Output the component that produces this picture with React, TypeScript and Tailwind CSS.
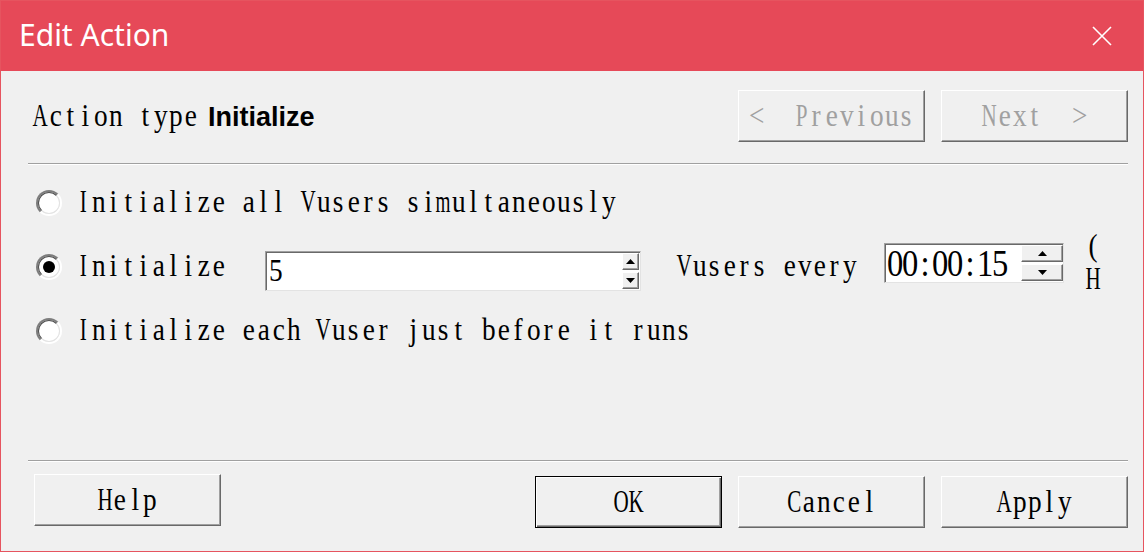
import React from "react";

const serif = "font-['Liberation_Serif','Times_New_Roman',serif]";

function squeeze(c: string) {
  if ("mwMW".includes(c)) return "scale-x-[0.62]";
  if (c >= "A" && c <= "Z") return "scale-x-[0.68]";
  return "scale-x-[0.88]";
}

// SimSun-style half-width text: each character sits in a fixed 15px cell
function Sim({ text, className = "" }: { text: string; className?: string }) {
  return (
    <span className={`inline-flex whitespace-pre ${className}`}>
      {[...text].map((c, i) => (
        <span key={i} className="w-[15px] flex justify-center">
          <span className={`inline-block ${squeeze(c)}`}>{c}</span>
        </span>
      ))}
    </span>
  );
}

function Radio({ checked }: { checked?: boolean }) {
  return (
    <div className="w-[26px] h-[26px] rounded-full border-2 border-t-[#7d7d7d] border-l-[#7d7d7d] border-r-white border-b-white flex items-center justify-center shrink-0">
      <div className="w-[22px] h-[22px] rounded-full bg-white border border-t-[#505050] border-l-[#505050] border-r-[#e3e3e3] border-b-[#e3e3e3] flex items-center justify-center">
        {checked && <div className="w-[12px] h-[12px] rounded-full bg-black" />}
      </div>
    </div>
  );
}

function Btn({
  label,
  disabled,
  primary,
  className = "",
}: {
  label: string;
  disabled?: boolean;
  primary?: boolean;
  className?: string;
}) {
  const frame = primary
    ? "border border-black shadow-[inset_1px_1px_#ffffff,inset_-1px_-1px_#696969,inset_-2px_-2px_#a0a0a0]"
    : "border border-t-white border-l-white border-r-[#696969] border-b-[#696969] shadow-[inset_-1px_-1px_#a0a0a0]";
  return (
    <div
      className={`w-[187px] h-[52px] bg-[#f0f0f0] flex items-center justify-center ${frame} ${
        disabled ? "text-[#a0a0a0]" : "text-black"
      } ${className}`}
    >
      <Sim text={label} className="text-[31px] leading-[30px]" />
    </div>
  );
}

function Arrow({ up }: { up?: boolean }) {
  return (
    <svg width="9" height="5" viewBox="0 0 9 5">
      {up ? <path d="M4.5 0 L9 5 L0 5 Z" fill="#000" /> : <path d="M0 0 L9 0 L4.5 5 Z" fill="#000" />}
    </svg>
  );
}

function SpinBtn({ up, w }: { up?: boolean; w: string }) {
  return (
    <div
      className={`${w} flex-1 bg-[#f0f0f0] border border-t-white border-l-white border-r-[#696969] border-b-[#696969] shadow-[inset_-1px_-1px_#a0a0a0] flex items-center justify-center`}
    >
      <Arrow up={up} />
    </div>
  );
}

function Divider() {
  return (
    <div className="w-full">
      <div className="h-px bg-[#a0a0a0]" />
      <div className="h-px bg-white" />
    </div>
  );
}

export default function App() {
  return (
    <div
      className={`w-[1144px] h-[552px] border border-[#e6545f] bg-[#f0f0f0] flex flex-col overflow-hidden ${serif} text-black`}
    >
      <div className="h-[70px] shrink-0 bg-[#e64958] flex items-center justify-between pl-[18px] pr-[31px]">
        <span className="font-['Noto_Sans',sans-serif] text-[30px] text-white leading-none pb-[2px]">Edit Action</span>
        <svg width="20" height="20" viewBox="0 0 20 20">
          <path d="M1 1 L19 19 M19 1 L1 19" stroke="#fff" strokeWidth="1.6" />
        </svg>
      </div>

      <div className="flex-1 flex flex-col pl-[27px] pr-[15px]">
        <div className="mt-[19px] h-[52px] flex items-center justify-between">
          <div className="pl-[5px] flex items-baseline pt-[2px]">
            <Sim text="Action type " className="text-[31px] leading-[30px]" />
            <span className="font-['Liberation_Sans',Arial,sans-serif] font-bold text-[27px] -ml-[5px]">Initialize</span>
          </div>
          <div className="flex gap-[16px]">
            <Btn disabled label="<  Previous" />
            <Btn disabled label="Next  >" />
          </div>
        </div>

        <div className="mt-[21px]">
          <Divider />
        </div>

        <div className="mt-[18px] h-[40px] flex items-center pl-[8px]">
          <Radio />
          <Sim text="Initialize all Vusers simultaneously" className="ml-[14px] text-[31px] leading-[30px] -mt-[3px]" />
        </div>

        <div className="mt-[20px] h-[48px] flex items-center pl-[8px]">
          <Radio checked />
          <Sim text="Initialize" className="ml-[14px] text-[31px] leading-[30px] -mt-[3px]" />
          <div className="ml-[39px] self-end w-[376px] h-[40px] bg-white border border-t-[#a0a0a0] border-l-[#a0a0a0] border-r-[#e3e3e3] border-b-[#e3e3e3] shadow-[inset_1px_1px_#696969] flex">
            <div className="flex-1 pl-[2px] flex items-center">
              <Sim text="5" className="text-[31px] leading-[30px]" />
            </div>
            <div className="flex flex-col py-[1px] pr-[1px] gap-[2px]">
              <SpinBtn up w="w-[17px]" />
              <SpinBtn w="w-[17px]" />
            </div>
          </div>
          <Sim text="Vusers every" className="ml-[36px] text-[31px] leading-[30px] -mt-[3px]" />
          <div className="ml-[27px] self-start w-[180px] h-[40px] bg-white border border-t-[#a0a0a0] border-l-[#a0a0a0] border-r-[#e3e3e3] border-b-[#e3e3e3] shadow-[inset_1px_1px_#696969] flex">
            <div className="flex-1 pl-[3px] flex items-center">
              <Sim text="00:00:15" className="text-[37px] leading-[37px]" />
            </div>
            <div className="flex flex-col py-[1px] gap-[2px]">
              <SpinBtn up w="w-[42px]" />
              <SpinBtn w="w-[42px]" />
            </div>
          </div>
          <div className="ml-[22px] self-start -mt-[14px] flex flex-col">
            <Sim text="(" className="text-[31px] leading-[33px]" />
            <Sim text="H" className="text-[31px] leading-[33px]" />
          </div>
        </div>

        <div className="mt-[20px] h-[40px] flex items-center pl-[8px]">
          <Radio />
          <Sim text="Initialize each Vuser just before it runs" className="ml-[14px] text-[31px] leading-[30px] -mt-[3px]" />
        </div>

        <div className="mt-[109px]">
          <Divider />
        </div>

        <div className="mt-[12px] flex items-start justify-between">
          <Btn className="ml-[6px]" label="Help" />
          <div className="flex gap-[16px] mt-[2px]">
            <Btn primary label="OK" />
            <Btn label="Cancel" />
            <Btn label="Apply" />
          </div>
        </div>
      </div>
    </div>
  );
}
